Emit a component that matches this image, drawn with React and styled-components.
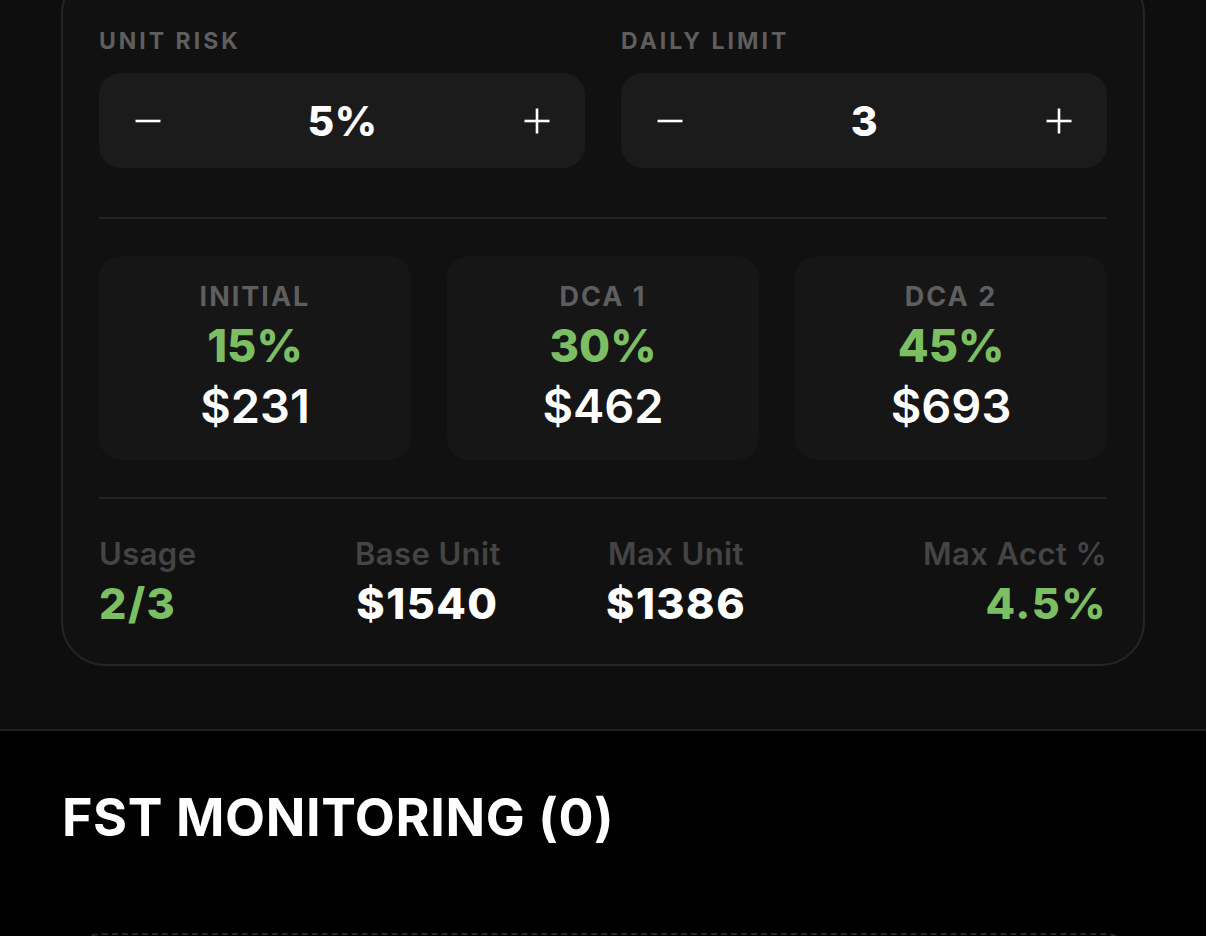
import React from 'react';
import styled, { createGlobalStyle } from 'styled-components';

const GlobalStyle = createGlobalStyle`
  html, body {
    margin: 0;
    background: #000;
    overflow: hidden;
    font-family: Inter, "Liberation Sans", sans-serif;
  }
`;

const TopSection = styled.section`
  background: #0e0e0e;
  padding: 0 61px 63px;
  border-bottom: 2px solid #1f1f1f;
`;

const Card = styled.div`
  margin-top: -30px;
  background: #111111;
  border: 2px solid #252525;
  border-radius: 44px;
  padding: 57px 36px 37px;
`;

const StepperGrid = styled.div`
  display: grid;
  grid-template-columns: 1fr 1fr;
  gap: 36px;
`;

const Field = styled.div`
  display: flex;
  flex-direction: column;
  gap: 20px;
`;

const FieldLabel = styled.div`
  font-size: 23px;
  line-height: 24px;
  font-weight: 700;
  letter-spacing: 3px;
  color: #5e5e5e;
`;

const Stepper = styled.div`
  height: 95px;
  background: #1b1b1b;
  border-radius: 22px;
  display: flex;
  align-items: center;
  justify-content: space-between;
  padding: 0 35px 0 36px;
`;

const StepButton = styled.button`
  background: none;
  border: none;
  padding: 0;
  width: 26px;
  height: 26px;
  display: flex;
  align-items: center;
  justify-content: center;
  cursor: pointer;
`;

const StepValue = styled.div`
  font-size: 41px;
  font-weight: 800;
  color: #fff;
  letter-spacing: 0.5px;
`;

const Divider = styled.hr`
  border: none;
  height: 2px;
  background: #222;
  margin: ${p => p.$top}px 0 37px;
`;

const StatGrid = styled.div`
  display: grid;
  grid-template-columns: repeat(3, 1fr);
  gap: 36px;
`;

const StatCard = styled.div`
  height: 204px;
  background: #161616;
  border-radius: 22px;
  display: flex;
  flex-direction: column;
  align-items: center;
  justify-content: center;
`;

const StatLabel = styled.div`
  font-size: 27px;
  line-height: 32px;
  font-weight: 700;
  letter-spacing: 2px;
  color: #5e5e5e;
`;

const StatPct = styled.div`
  margin-top: 9px;
  font-size: 45px;
  line-height: 48px;
  font-weight: 800;
  color: #7cbf63;
`;

const StatAmount = styled.div`
  margin-top: 7px;
  font-size: 47px;
  line-height: 58px;
  font-weight: 600;
  color: #fff;
`;

const SummaryRow = styled.div`
  display: grid;
  grid-template-columns: 150px 145px 140px 1fr;
  column-gap: 106px;
`;

const SummaryItem = styled.div`
  display: flex;
  flex-direction: column;
  gap: 7px;
  text-align: ${p => p.$align};
  white-space: nowrap;
`;

const SummaryLabel = styled.div`
  font-size: 31px;
  line-height: 36px;
  font-weight: 600;
  letter-spacing: 0.4px;
  color: #444;
`;

const SummaryValue = styled.div`
  font-size: 43px;
  line-height: 48px;
  font-weight: 800;
  letter-spacing: 1.5px;
  color: ${p => (p.$green ? '#7cbf63' : '#fff')};
`;

const MonitorSection = styled.section`
  background: #000;
  padding: 57px 62px 0;
`;

const MonitorTitle = styled.h2`
  margin: 0;
  font-size: 52px;
  line-height: 60px;
  font-weight: 700;
  color: #fff;
  letter-spacing: 0.6px;
`;

const EmptyBox = styled.div`
  margin-top: 85px;
  height: 200px;
  border: 2px dashed #262626;
  border-radius: 40px;
`;

const Minus = () => (
  <svg width="26" height="26" viewBox="0 0 26 26">
    <line x1="0.5" y1="13" x2="25.5" y2="13" stroke="#fff" strokeWidth="2.6" />
  </svg>
);

const Plus = () => (
  <svg width="26" height="26" viewBox="0 0 26 26">
    <line x1="0.5" y1="13" x2="25.5" y2="13" stroke="#fff" strokeWidth="2.6" />
    <line x1="13" y1="0.5" x2="13" y2="25.5" stroke="#fff" strokeWidth="2.6" />
  </svg>
);

const steppers = [
  { label: 'UNIT RISK', value: '5%' },
  { label: 'DAILY LIMIT', value: '3' },
];

const stats = [
  { label: 'INITIAL', pct: '15%', amount: '$231' },
  { label: 'DCA 1', pct: '30%', amount: '$462' },
  { label: 'DCA 2', pct: '45%', amount: '$693' },
];

const summary = [
  { label: 'Usage', value: '2/3', green: true, align: 'left' },
  { label: 'Base Unit', value: '$1540', align: 'center' },
  { label: 'Max Unit', value: '$1386', align: 'center' },
  { label: 'Max Acct %', value: '4.5%', green: true, align: 'right' },
];

export default function App() {
  return (
    <>
      <GlobalStyle />
      <TopSection>
        <Card>
          <StepperGrid>
            {steppers.map(s => (
              <Field key={s.label}>
                <FieldLabel>{s.label}</FieldLabel>
                <Stepper>
                  <StepButton aria-label="decrease"><Minus /></StepButton>
                  <StepValue>{s.value}</StepValue>
                  <StepButton aria-label="increase"><Plus /></StepButton>
                </Stepper>
              </Field>
            ))}
          </StepperGrid>

          <Divider $top={49} />

          <StatGrid>
            {stats.map(s => (
              <StatCard key={s.label}>
                <StatLabel>{s.label}</StatLabel>
                <StatPct>{s.pct}</StatPct>
                <StatAmount>{s.amount}</StatAmount>
              </StatCard>
            ))}
          </StatGrid>

          <Divider $top={37} />

          <SummaryRow>
            {summary.map(s => (
              <SummaryItem key={s.label} $align={s.align}>
                <SummaryLabel>{s.label}</SummaryLabel>
                <SummaryValue $green={s.green}>{s.value}</SummaryValue>
              </SummaryItem>
            ))}
          </SummaryRow>
        </Card>
      </TopSection>

      <MonitorSection>
        <MonitorTitle>FST MONITORING (0)</MonitorTitle>
        <EmptyBox />
      </MonitorSection>
    </>
  );
}
